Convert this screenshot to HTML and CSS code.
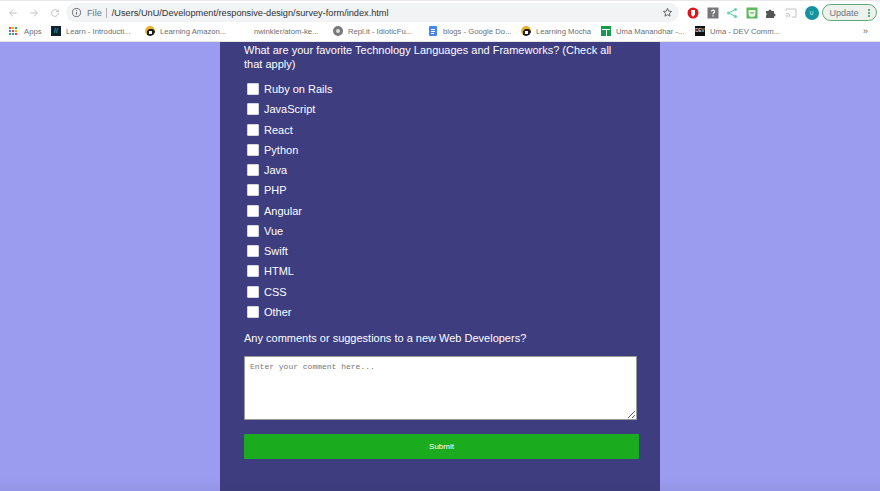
FILE: index.html
```html
<!DOCTYPE html>
<html>
<head>
    <title>Survey Form</title>
    <link rel="stylesheet" href="styles.css">
</head>
<body>
    <header class="browser">
        <div class="toolbar">
            <div class="nav-buttons">
                <svg class="nav-icon" viewBox="0 0 12 12"><path d="M10.5 6H2M6 2 2 6l4 4"/></svg>
                <svg class="nav-icon" viewBox="0 0 12 12"><path d="M1.5 6H10M6 2l4 4-4 4"/></svg>
                <svg class="nav-icon" viewBox="0 0 12 12"><path d="M10 6a4 4 0 1 1-1.2-2.8L10 4.4M10 1.6v2.8H7.2"/></svg>
            </div>
            <div class="address">
                <svg class="info-icon" viewBox="0 0 12 12"><circle cx="6" cy="6" r="4.4"/><path d="M6 5.4v3M6 3.400v1"/></svg>
                <span class="scheme">File</span>
                <span class="divider"></span>
                <span class="url">/Users/UnU/Development/responsive-design/survey-form/index.html</span>
                <svg class="star" viewBox="0 0 12 12"><path d="m6 1.5 1.3 3 3.2.3-2.4 2.1.7 3.1L6 8.4l-2.8 1.6.7-3.1-2.4-2.1 3.2-.3z"/></svg>
            </div>
            <div class="extensions">
                <svg class="ext" viewBox="0 0 12 12"><circle cx="6" cy="6" r="5.5" fill="#e0131b"/><path d="M4 3h4v4.500L6 10 4 7.500z" fill="#fff"/></svg>
                <svg class="ext" viewBox="0 0 12 12"><rect x=".5" y=".5" width="11" height="11" fill="#77777b"/><path d="M4.500 4.500C4.500 2.600 7.600 2.600 7.600 4.500 7.600 5.800 6 5.800 6 7.200M6 8.200v1.200" fill="none" stroke="#fff" stroke-width="1.2"/></svg>
                <svg class="ext" viewBox="0 0 12 12"><path d="M9.500 2.500 2.500 6l7 3.500" fill="none" stroke="#5fd0b4"/><circle cx="9.500" cy="2.500" r="1.500" fill="#5fd0b4"/><circle cx="2.500" cy="6" r="1.500" fill="#5fd0b4"/><circle cx="9.500" cy="9.500" r="1.500" fill="#5fd0b4"/></svg>
                <svg class="ext" viewBox="0 0 12 12"><rect x=".5" y=".5" width="11" height="11" fill="#5cb85c"/><path d="M2.500 3h7v3.500a3.500 3.500 0 0 1-7 0z" fill="#e8f5e0"/><path d="m4.500 5 1.500 1.500L7.500 5" fill="none" stroke="#3d8b3d"/></svg>
                <svg class="ext" viewBox="0 0 12 12"><path d="M1 4h2.500a1.500 1.500 0 0 1 3 0H9v2.500a1.500 1.500 0 0 1 0 3V11H1V8.500a1.500 1.500 0 0 0 0-2.500z" fill="#555"/></svg>
                <svg class="ext" viewBox="0 0 12 12"><path d="M1 4V2h10v8H7M1 10h1M1 8a2 2 0 0 1 2 2M1 6a4 4 0 0 1 4 4" fill="none" stroke="#c4c4c6"/></svg>
                <span class="avatar">U</span>
            </div>
            <div class="update">
                <span>Update</span>
                <span class="update-dots"><i></i><i></i><i></i></span>
            </div>
        </div>
        <div class="bookmarks">
            <span class="bookmark apps-bookmark">
                <span class="apps-grid">
                    <i class="red"></i><i class="yellow"></i><i class="green"></i>
                    <i class="blue"></i><i class="red"></i><i class="yellow"></i>
                    <i class="green"></i><i class="blue"></i><i class="red"></i>
                </span>
                Apps
            </span>
            <span class="bookmark learn-bookmark"><span class="favicon learn-icon">//</span>Learn - Introducti...</span>
            <span class="bookmark amazon-bookmark"><span class="favicon duck-icon"></span>Learning Amazon...</span>
            <span class="bookmark github-bookmark">nwinkler/atom-ke...</span>
            <span class="bookmark repl-bookmark"><span class="favicon repl-icon"></span>Repl.it - IdioticFu...</span>
            <span class="bookmark docs-bookmark"><span class="favicon docs-icon"></span>blogs - Google Do...</span>
            <span class="bookmark mocha-bookmark"><span class="favicon duck-icon"></span>Learning Mocha</span>
            <span class="bookmark uma-bookmark"><span class="favicon plus-icon"></span>Uma Manandhar -...</span>
            <span class="bookmark dev-bookmark"><span class="favicon dev-icon">DEV</span>Uma - DEV Comm...</span>
            <span class="more">»</span>
        </div>
    </header>

    <main class="page">
        <form class="survey">
            <p class="question">What are your favorite Technology Languages and Frameworks? (Check all that apply)</p>
            <div class="options">
                <label class="option"><input type="checkbox"><span>Ruby on Rails</span></label>
                <label class="option"><input type="checkbox"><span>JavaScript</span></label>
                <label class="option"><input type="checkbox"><span>React</span></label>
                <label class="option"><input type="checkbox"><span>Python</span></label>
                <label class="option"><input type="checkbox"><span>Java</span></label>
                <label class="option"><input type="checkbox"><span>PHP</span></label>
                <label class="option"><input type="checkbox"><span>Angular</span></label>
                <label class="option"><input type="checkbox"><span>Vue</span></label>
                <label class="option"><input type="checkbox"><span>Swift</span></label>
                <label class="option"><input type="checkbox"><span>HTML</span></label>
                <label class="option"><input type="checkbox"><span>CSS</span></label>
                <label class="option"><input type="checkbox"><span>Other</span></label>
            </div>
            <p class="question comments-label">Any comments or suggestions to a new Web Developers?</p>
            <textarea class="comment" placeholder="Enter your comment here..."></textarea>
            <button type="button" class="submit-button">Submit</button>
        </form>
    </main>
</body>
</html>
```

FILE: styles.css
```css
html,
body {
    height: 100%;
}

body {
    margin: 0;
    display: flex;
    flex-direction: column;
    overflow: hidden;
    font-family: "Liberation Sans", Arial, sans-serif;
    background-color: #9b9bf0;
}

/* browser chrome */
.browser {
    height: 42px;
    flex-shrink: 0;
    box-sizing: border-box;
    padding-top: 2px;
    background-color: #fff;
    border-top: 1px solid #e8e8ea;
    border-bottom: 1px solid #e4e4e6;
}

.toolbar {
    height: 19px;
    display: flex;
    align-items: center;
    padding: 0 2px 0 8px;
}

.nav-buttons {
    display: flex;
    gap: 11px;
    width: 58px;
    flex-shrink: 0;
}

.nav-icon {
    width: 10px;
    height: 10px;
    fill: none;
    stroke: #c2c3c6;
    stroke-width: 1.2;
}

.address {
    width: 613px;
    height: 19px;
    flex-shrink: 0;
    display: flex;
    align-items: center;
    box-sizing: border-box;
    padding: 0 6px 0 5px;
    background-color: #f1f3f4;
    border-radius: 10px;
    font-size: 9.2px;
}

.info-icon {
    width: 11px;
    height: 11px;
    fill: none;
    stroke: #5f6368;
}

.scheme {
    margin-left: 5px;
    color: #70757a;
}

.divider {
    width: 1px;
    height: 10px;
    margin: 0 5px 0 4px;
    background-color: #b0b2b6;
}

.url {
    flex: 1;
    color: #303236;
}

.star {
    width: 11px;
    height: 11px;
    fill: none;
    stroke: #55585c;
}

.extensions {
    display: flex;
    align-items: center;
    gap: 7.6px;
    margin-left: 8px;
}

.ext {
    width: 12px;
    height: 12px;
}

.avatar {
    width: 14px;
    height: 14px;
    border-radius: 50%;
    background-color: #12939f;
    color: #fff;
    font-size: 5px;
    line-height: 14px;
    text-align: center;
}

.update {
    width: 55px;
    height: 17px;
    margin-left: 3px;
    flex-shrink: 0;
    display: flex;
    align-items: center;
    justify-content: space-between;
    box-sizing: border-box;
    padding: 0 6px 0 7px;
    border: 1px solid #5fa777;
    border-radius: 9px;
    background-color: #eef2ef;
    color: #70757a;
    font-size: 9px;
}

.update-dots {
    display: flex;
    flex-direction: column;
    gap: 1px;
}

.update-dots i {
    width: 2px;
    height: 2px;
    border-radius: 50%;
    background-color: #2e9a52;
}

.bookmarks {
    height: 18px;
    display: flex;
    align-items: center;
    font-size: 7.7px;
    color: #6d6f73;
}

.bookmark {
    display: flex;
    align-items: center;
    gap: 5px;
    white-space: nowrap;
}

.apps-bookmark { margin-left: 9px; width: 42px; }
.learn-bookmark { width: 94px; }
.amazon-bookmark { width: 109px; }
.github-bookmark { width: 79px; }
.repl-bookmark { width: 95px; }
.docs-bookmark { width: 93px; }
.mocha-bookmark { width: 80px; }
.uma-bookmark { width: 94px; }
.dev-bookmark { width: 168px; }

.apps-grid {
    width: 10px;
    display: grid;
    grid-template-columns: repeat(3, 2px);
    gap: 1px;
}

.apps-grid i {
    height: 2px;
}

.red { background-color: #e8453c; }
.yellow { background-color: #f4b400; }
.green { background-color: #34a853; }
.blue { background-color: #4285f4; }

.favicon {
    width: 10px;
    height: 10px;
    flex-shrink: 0;
    display: block;
}

.learn-icon {
    background-color: #10222c;
    color: #2fd6c8;
    font-size: 7px;
    line-height: 10px;
    text-align: center;
}

.duck-icon {
    border-radius: 50%;
    background:
        radial-gradient(circle at 55% 65%, #fff 0 1.5px, transparent 2px),
        radial-gradient(circle at 60% 70%, #1c1c1c 0 4px, transparent 4.500px),
        #e8b22c;
}

.repl-icon {
    box-sizing: border-box;
    border-radius: 50%;
    border: 3px solid #77797c;
    background-color: #ddd;
}

.docs-icon {
    width: 8px;
    margin: 0 1px;
    border-radius: 1px;
    background:
        linear-gradient(#fff, #fff) 2px 3px / 4px 1px no-repeat,
        linear-gradient(#fff, #fff) 2px 5px / 4px 1px no-repeat,
        linear-gradient(#fff, #fff) 2px 7px / 3px 1px no-repeat,
        #4a86f0;
}

.plus-icon {
    background:
        linear-gradient(#fff, #fff) 4.500px 3px / 1px 7px no-repeat,
        linear-gradient(#fff, #fff) 1px 3px / 8px 1px no-repeat,
        #129c4d;
}

.dev-icon {
    background-color: #111;
    color: #fff;
    font-size: 4.500px;
    line-height: 10px;
    text-align: center;
}

.more {
    color: #666;
    font-size: 9px;
}

/* survey */
.page {
    flex: 1;
    position: relative;
    display: flex;
    justify-content: center;
    min-height: 0;
}

/* faint shadow along the bottom edge of the window */
.page::after {
    content: "";
    position: absolute;
    left: 0;
    right: 0;
    bottom: 0;
    height: 14px;
    background: linear-gradient(rgba(40, 40, 60, 0), rgba(40, 40, 60, 0.05));
}

.survey {
    width: 440px;
    box-sizing: border-box;
    padding: 1px 21px 0 24px;
    background-color: #3d3d80;
    color: #fff;
}

.question {
    max-width: 375px;
    margin: 0;
    font-size: 11px;
    line-height: 14px;
}

.options {
    margin-top: 8px;
}

.option {
    height: 20.25px;
    display: flex;
    align-items: center;
    font-size: 11px;
}

.option input {
    width: 12px;
    height: 12px;
    margin: 0 5px 0 3px;
    appearance: none;
    background-color: #fff;
    border: 1px solid #d4d4dc;
    border-radius: 1px;
}

.comments-label {
    margin-top: 9px;
}

.comment {
    display: block;
    width: 393px;
    height: 64px;
    margin-top: 11px;
    box-sizing: border-box;
    padding: 5px;
    border: 1px solid #9a9a9a;
    background-color: #fff;
    font-family: "Liberation Mono", monospace;
    font-size: 8px;
}

.comment::placeholder {
    color: #777;
}

.submit-button {
    display: block;
    width: 395px;
    height: 25px;
    margin-top: 14px;
    border: none;
    border-radius: 1px;
    background-color: #1bab1f;
    color: #fff;
    font-family: inherit;
    font-size: 8px;
}
```
